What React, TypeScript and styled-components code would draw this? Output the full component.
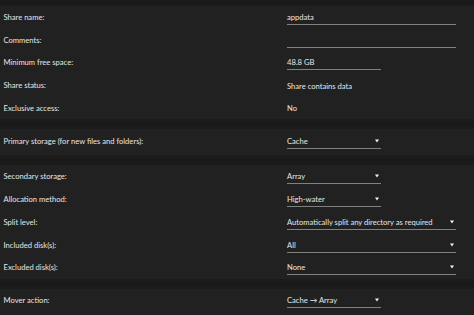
import React from "react";
import styled, { createGlobalStyle } from "styled-components";

const GlobalStyle = createGlobalStyle`
	html, body {
		margin: 0;
		padding: 0;
		background: #212121;
	}
	body {
		font-family: Lato, "Noto Sans", sans-serif;
		font-size: 7.6px;
		color: #e6e6e6;
	}
`;

// --- LAYOUT ---------------------------------------------------------------------------------
const Page = styled.div`
	display: flex;
	flex-direction: column;
	width: 474px;
	height: 315px;
	overflow: hidden;
	background: #212121;
`;

const Band = styled.div<{ h: number }>`
	height: ${(p) => p.h}px;
	flex-shrink: 0;
	background: linear-gradient(#1c1c1c, #191919 50%, #1c1c1c);
`;

const Section = styled.div<{ padBottom?: number }>`
	display: flex;
	flex-direction: column;
	padding-bottom: ${(p) => p.padBottom ?? 0}px;
`;

const Row = styled.div`
	display: grid;
	grid-template-columns: 287px 1fr;
	align-items: center;
	height: 22.75px;
	flex-shrink: 0;
`;

const Label = styled.div`
	padding-left: 3.5px;
	white-space: nowrap;
`;

// --- FIELDS ---------------------------------------------------------------------------------
const Field = styled.div<{ wide?: boolean; underline?: boolean }>`
	display: flex;
	align-items: center;
	justify-content: space-between;
	width: ${(p) => (p.wide ? 169 : 94)}px;
	height: 16px;
	box-sizing: border-box;
	padding-top: 1px;
	border-bottom: ${(p) => (p.underline ? "1.5px solid #808080" : "none")};
	white-space: nowrap;
`;

const Caret = styled.svg`
	width: 4px;
	height: 4px;
	margin-right: 2px;
	flex-shrink: 0;
`;

type RowData = {
	label: string;
	value: string;
	kind: "input" | "select" | "text";
	wide?: boolean;
};

const basic: RowData[] = [
	{ label: "Share name:", value: "appdata", kind: "input", wide: true },
	{ label: "Comments:", value: "", kind: "input", wide: true },
	{ label: "Minimum free space:", value: "48.8 GB", kind: "input" },
	{ label: "Share status:", value: "Share contains data", kind: "text" },
	{ label: "Exclusive access:", value: "No", kind: "text" },
];

const primary: RowData[] = [
	{ label: "Primary storage (for new files and folders):", value: "Cache", kind: "select" },
];

const secondary: RowData[] = [
	{ label: "Secondary storage:", value: "Array", kind: "select" },
	{ label: "Allocation method:", value: "High-water", kind: "select" },
	{ label: "Split level:", value: "Automatically split any directory as required", kind: "select", wide: true },
	{ label: "Included disk(s):", value: "All", kind: "select", wide: true },
	{ label: "Excluded disk(s):", value: "None", kind: "select", wide: true },
];

const mover: RowData[] = [
	{ label: "Mover action:", value: "Cache \u2192 Array", kind: "select" },
];

function renderRows(rows: RowData[]) {
	return rows.map((r) => (
		<Row key={r.label}>
			<Label>{r.label}</Label>
			<Field wide={r.wide} underline={r.kind !== "text"}>
				<span>{r.value}</span>
				{r.kind === "select" && (
					<Caret viewBox="0 0 4 4">
						<path d="M0 0.5 H4 L2 3.5 Z" fill="#f2f2f2" />
					</Caret>
				)}
			</Field>
		</Row>
	));
}

export default function App() {
	return (
		<Page>
			<GlobalStyle />
			<Band h={5.6} />
			<Section>{renderRows(basic)}</Section>
			<Band h={10} />
			<Section padBottom={3}>{renderRows(primary)}</Section>
			<Band h={10} />
			<Section>{renderRows(secondary)}</Section>
			<Band h={10} />
			<Section>{renderRows(mover)}</Section>
		</Page>
	);
}
